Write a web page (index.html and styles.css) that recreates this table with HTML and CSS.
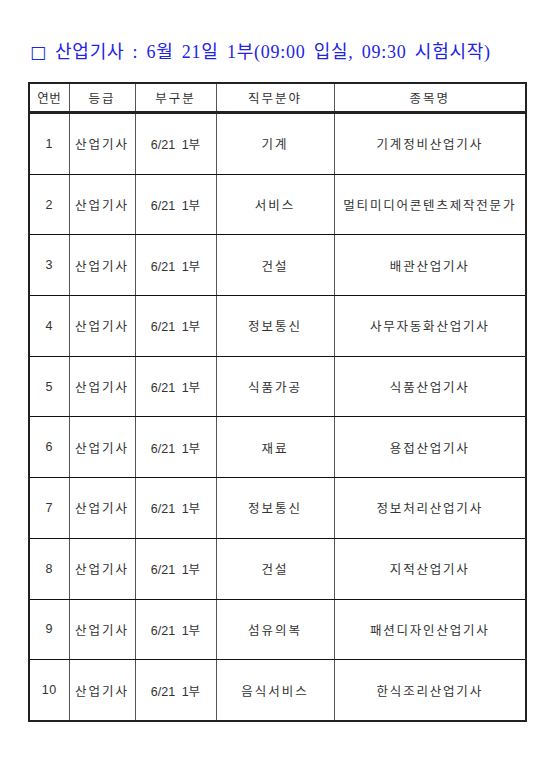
FILE: index.html
```html
<!DOCTYPE html>
<html lang="ko">
<head>
<meta charset="utf-8">
<link rel="stylesheet" href="styles.css">
</head>
<body>
<div class="page">
  <h1 class="title"><span class="box">□</span> 산업기사 : 6월 21일 1부(09:00 입실, 09:30 시험시작)</h1>
  <table class="sched">
    <colgroup>
      <col class="c1"><col class="c2"><col class="c3"><col class="c4"><col class="c5">
    </colgroup>
    <thead>
      <tr><th>연번</th><th>등급</th><th>부구분</th><th>직무분야</th><th>종목명</th></tr>
    </thead>
    <tbody>
      <tr><td>1</td><td>산업기사</td><td>6/21 1부</td><td>기계</td><td>기계정비산업기사</td></tr>
      <tr><td>2</td><td>산업기사</td><td>6/21 1부</td><td>서비스</td><td>멀티미디어콘텐츠제작전문가</td></tr>
      <tr><td>3</td><td>산업기사</td><td>6/21 1부</td><td>건설</td><td>배관산업기사</td></tr>
      <tr><td>4</td><td>산업기사</td><td>6/21 1부</td><td>정보통신</td><td>사무자동화산업기사</td></tr>
      <tr><td>5</td><td>산업기사</td><td>6/21 1부</td><td>식품가공</td><td>식품산업기사</td></tr>
      <tr><td>6</td><td>산업기사</td><td>6/21 1부</td><td>재료</td><td>용접산업기사</td></tr>
      <tr><td>7</td><td>산업기사</td><td>6/21 1부</td><td>정보통신</td><td>정보처리산업기사</td></tr>
      <tr><td>8</td><td>산업기사</td><td>6/21 1부</td><td>건설</td><td>지적산업기사</td></tr>
      <tr><td>9</td><td>산업기사</td><td>6/21 1부</td><td>섬유의복</td><td>패션디자인산업기사</td></tr>
      <tr><td>10</td><td>산업기사</td><td>6/21 1부</td><td>음식서비스</td><td>한식조리산업기사</td></tr>
    </tbody>
  </table>
</div>
</body>
</html>
```
FILE: styles.css
```css
html, body {
  margin: 0;
  padding: 0;
  background: #fff;
}
.page {
  padding: 40px 0 0 28px;
}
.title {
  margin: 0 0 18px 2px;
  font-family: "Liberation Serif", "Noto Sans CJK KR", serif;
  font-weight: normal;
  font-size: 18px;
  line-height: 24px;
  color: #2323e6;
  letter-spacing: 0.75px;
  word-spacing: 3px;
}
.box {
  font-family: "DejaVu Sans", sans-serif;
  font-size: 17px;
}
.sched {
  border-collapse: collapse;
  width: 497px;
  table-layout: fixed;
  font-family: "Liberation Sans", "Noto Sans CJK KR", sans-serif;
  font-size: 12.5px;
  color: #333;
  border: 2px solid #222;
}
.c1 { width: 40px; }
.c2 { width: 66px; }
.c3 { width: 81px; }
.c4 { width: 118px; }
.c5 { width: 192px; }
.sched th, .sched td {
  text-align: center;
  font-weight: normal;
  padding: 0;
  border-left: 1px solid #555;
  border-right: 1px solid #555;
  border-top: 1px solid #111;
  border-bottom: 1px solid #111;
  letter-spacing: 2px;
}
.sched th {
  height: 27px;
  border-bottom: 3px solid #222;
}
.sched td {
  height: 59.7px;
}
.sched td:first-child, .sched th:first-child {
  letter-spacing: 0.5px;
}
.sched td:nth-child(3) {
  letter-spacing: 0;
  word-spacing: 3px;
}
.sched td:nth-child(5) {
  letter-spacing: 1.8px;
}
```
